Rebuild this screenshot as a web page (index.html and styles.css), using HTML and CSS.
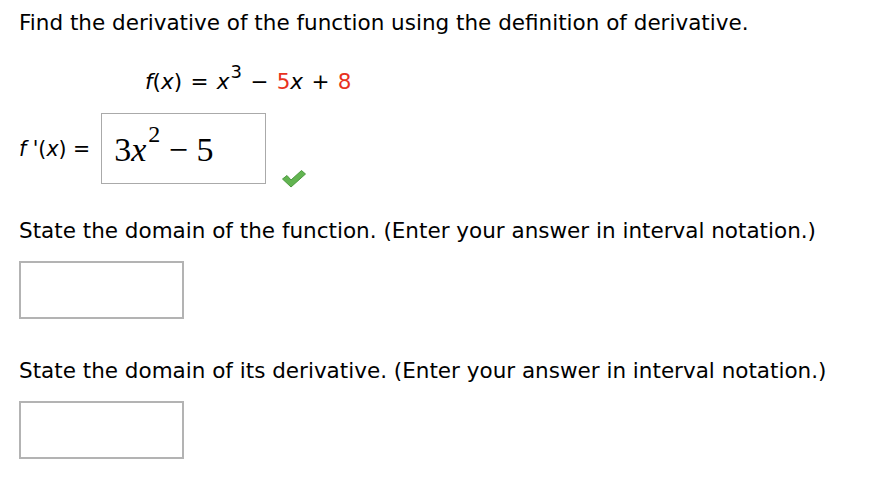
FILE: index.html
```html
<!DOCTYPE html>
<html lang="en">
<head>
    <meta charset="UTF-8">
    <meta name="viewport" content="width=device-width, initial-scale=1.0">
    <title>Derivative</title>
    <link rel="stylesheet" href="styles.css">
</head>
<body>
    <main class="questao">
        <p class="enunciado">Find the derivative of the function using the definition of derivative.</p>
        <p class="funcao"><i>f</i>(<i>x</i>) = <i>x</i><sup>3</sup> &minus; <span class="vermelho">5</span><i>x</i> + <span class="vermelho">8</span></p>
        <div class="resposta-linha">
            <span class="rotulo"><i>f</i> '(<i>x</i>) =</span>
            <div class="caixa caixa--derivada">
                <span class="math">3<i>x</i><sup>2</sup> &minus; 5</span>
            </div>
            <svg class="check" width="26" height="20" viewBox="0 0 26 20">
                <path d="M1.5 11 L6 7.5 L10 12 L20.5 2.5 L24.5 6 L10 19 Z" fill="#62b451" stroke="#4c9a3e" stroke-width="1" stroke-linejoin="round"/>
            </svg>
        </div>
        <p class="enunciado enunciado--dominio">State the domain of the function. (Enter your answer in interval notation.)</p>
        <div class="caixa caixa--vazia"></div>
        <p class="enunciado enunciado--dominio2">State the domain of its derivative. (Enter your answer in interval notation.)</p>
        <div class="caixa caixa--vazia"></div>
    </main>
</body>
</html>
```

FILE: styles.css
```css
* {
    box-sizing: border-box;
}
body {
    margin: 0;
    font-family: "DejaVu Sans", Verdana, sans-serif;
    color: #000;
    background: #fff;
}
.questao {
    padding: 10px 19px;
}
.enunciado {
    margin: 0;
    font-size: 21.5px;
    line-height: 26px;
}
.funcao {
    margin: 33px 0 0 126px;
    font-size: 21.5px;
    line-height: 26px;
    word-spacing: 1.5px;
}
.funcao sup {
    font-size: 18px;
    line-height: 0;
    position: relative;
    top: -3px;
    margin-left: 1px;
}
.vermelho {
    color: #e8321e;
}
.resposta-linha {
    display: flex;
    align-items: flex-start;
    margin-top: 18px;
}
.rotulo {
    font-size: 20.5px;
    margin-top: 24px;
    margin-right: 11px;
}
.caixa {
    border: 1px solid #aaa;
    background: #fff;
}
.caixa--derivada {
    width: 165px;
    height: 71px;
    padding: 17px 0 0 12px;
    white-space: nowrap;
}
.math {
    font-family: "Liberation Serif", "Times New Roman", serif;
    font-size: 34px;
}
.math sup {
    font-size: 24px;
    line-height: 0;
    position: relative;
    top: -7px;
    margin-left: 2px;
}
.check {
    margin-top: 55px;
    margin-left: 15px;
}
.enunciado--dominio {
    margin-top: 30px;
}
.enunciado--dominio2 {
    margin-top: 39px;
}
.caixa--vazia {
    width: 165px;
    height: 58px;
    margin-top: 17px;
    border: 2px solid #b3b3b3;
}
```
